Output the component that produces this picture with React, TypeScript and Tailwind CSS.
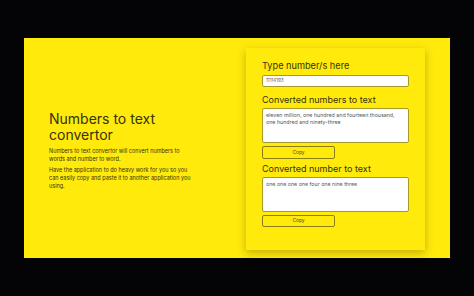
export default function App() {
  return (
    <div
      className="flex min-h-screen w-full flex-col items-center bg-[#040406] text-[#35320c]"
      style={{ fontFamily: "Inter, 'Noto Sans', sans-serif" }}
    >
      <div className="mt-[38px] flex h-[220px] w-[426px] bg-[#ffea0c]">
        <section className="flex flex-1 flex-col justify-center pl-[25px] pt-[6px]">
          <h1 className="text-[14px] font-normal leading-[16px]">
            Numbers to text
            <br />
            convertor
          </h1>
          <p className="mt-[4px] w-[138px] text-[5.5px] leading-[8px]">
            Numbers to text convertor will convert numbers to words and number to word.
          </p>
          <p className="mt-[4px] w-[152px] text-[5.5px] leading-[7.7px]">
            Have the application to do heavy work for you so you
            <br />
            can easily copy and paste it to another application you using.
          </p>
        </section>

        <section className="mb-[8px] mr-[25px] mt-[10px] flex w-[179px] flex-col px-[16px] pt-[12px] shadow-[0_3px_8px_rgba(80,70,0,0.35)]">
          <label className="text-[9.2px] font-normal leading-[12px]">Type number/s here</label>
          <div className="mt-[3px] flex h-[12px] items-center rounded-[2px] border border-[#a89a2a] bg-white px-[3px] text-[4.5px] text-[#555]">
            11114193
          </div>

          <label className="mt-[7px] text-[9px] font-normal leading-[12px]">
            Converted numbers to text
          </label>
          <div className="mt-[2px] h-[35px] rounded-[2px] border border-[#a89a2a] bg-white px-[3px] pt-[3px] text-[5.3px] leading-[7px] text-[#555]">
            eleven million, one hundred and fourteen thousand, one hundred and ninety-three
          </div>
          <button className="mt-[3px] h-[13px] w-[73px] rounded-[2px] border border-[#8a7e10] bg-[#ffea0c] text-[4.8px] text-[#444]">
            Copy
          </button>

          <label className="mt-[4px] text-[9px] font-normal leading-[12px]">
            Converted number to text
          </label>
          <div className="mt-[2px] h-[35px] rounded-[2px] border border-[#a89a2a] bg-white px-[3px] pt-[3px] text-[5.3px] leading-[7px] text-[#555]">
            one one one one four one nine three
          </div>
          <button className="mt-[3px] h-[12px] w-[73px] rounded-[2px] border border-[#8a7e10] bg-[#ffea0c] text-[4.8px] text-[#444]">
            Copy
          </button>
        </section>
      </div>
    </div>
  );
}
